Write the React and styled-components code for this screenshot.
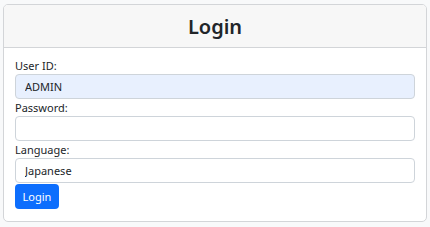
import React from 'react';
import styled, { createGlobalStyle } from 'styled-components';

const GlobalStyle = createGlobalStyle`
  html, body {
    margin: 0;
    padding: 0;
    background: #f8f9fa;
    font-family: 'Noto Sans', 'Open Sans', sans-serif;
    color: #212529;
  }
  * { box-sizing: border-box; }
`

const Page = styled.div`
  padding: 4px 3px 0 3px;
`

const Card = styled.div`
  background: #fff;
  border: 1px solid #d3d5d8;
  border-radius: 5px;
  overflow: hidden;
`

const Header = styled.div`
  height: 43px;
  background: #f7f7f7;
  border-bottom: 1px solid #d3d5d8;
  display: flex;
  align-items: center;
  justify-content: center;
`

const Title = styled.h1`
  margin: 0;
  font-size: 20px;
  font-weight: 600;
  color: #212529;
`

const Body = styled.form`
  padding: 10px 11px 12px 11px;
  display: flex;
  flex-direction: column;
`

const Label = styled.label`
  font-size: 11px;
  line-height: 16px;
  height: 16px;
  color: #212529;
`

const Input = styled.input`
  height: 25px;
  width: 100%;
  border: 1px solid #ced4da;
  border-radius: 4px;
  padding: 0 9px;
  font-family: inherit;
  font-size: 11px;
  color: #212529;
  background: ${({ filled }) => (filled ? '#e8f0fe' : '#fff')};
  outline: none;
  margin-bottom: 1px;
`

const Button = styled.button`
  align-self: flex-start;
  height: 25px;
  width: 44px;
  border: none;
  border-radius: 4px;
  background: #0d6efd;
  color: #fff;
  font-family: inherit;
  font-size: 11px;
  padding: 0;
`

export default function App() {
  return (
    <>
      <GlobalStyle />
      <Page>
        <Card>
          <Header>
            <Title>Login</Title>
          </Header>
          <Body onSubmit={e => e.preventDefault()}>
            <Label>User ID:</Label>
            <Input filled defaultValue="ADMIN" />
            <Label>Password:</Label>
            <Input type="password" />
            <Label>Language:</Label>
            <Input defaultValue="Japanese" />
            <Button type="submit">Login</Button>
          </Body>
        </Card>
      </Page>
    </>
  );
}
